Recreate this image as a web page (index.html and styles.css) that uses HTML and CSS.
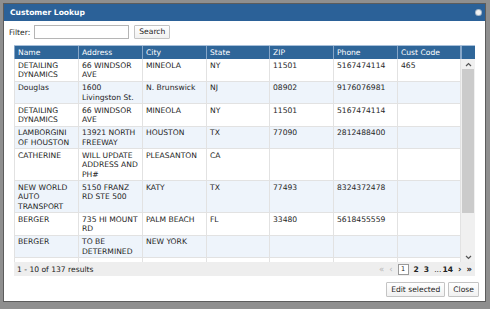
FILE: index.html
```html
<!DOCTYPE html>
<html>
<head>
<meta charset="utf-8">
<link rel="stylesheet" href="styles.css">
</head>
<body>
<div class="dialog">
  <div class="titlebar">
    <span class="title">Customer Lookup</span>
    <span class="close-icon"></span>
  </div>
  <div class="content">
    <div class="filter">
      <label class="filter-label">Filter:</label>
      <input class="filter-input" type="text">
      <button class="btn search-btn">Search</button>
    </div>
    <div class="grid">
      <div class="grid-head">
        <table class="tbl head-tbl">
          <colgroup><col class="c1"><col class="c2"><col class="c3"><col class="c4"><col class="c5"><col class="c6"><col class="c7"></colgroup>
          <tr><th>Name</th><th>Address</th><th>City</th><th>State</th><th>ZIP</th><th>Phone</th><th>Cust Code</th></tr>
        </table>
        <div class="head-spacer"></div>
      </div>
      <div class="grid-body">
        <div class="rows">
          <table class="tbl body-tbl">
            <colgroup><col class="c1"><col class="c2"><col class="c3"><col class="c4"><col class="c5"><col class="c6"><col class="c7"></colgroup>
            <tr><td>DETAILING DYNAMICS</td><td>66 WINDSOR AVE</td><td>MINEOLA</td><td>NY</td><td>11501</td><td>5167474114</td><td>465</td></tr>
            <tr class="alt"><td>Douglas</td><td>1600 Livingston St.</td><td>N. Brunswick</td><td>NJ</td><td>08902</td><td>9176076981</td><td></td></tr>
            <tr><td>DETAILING DYNAMICS</td><td>66 WINDSOR AVE</td><td>MINEOLA</td><td>NY</td><td>11501</td><td>5167474114</td><td></td></tr>
            <tr class="alt"><td>LAMBORGINI OF HOUSTON</td><td>13921 NORTH FREEWAY</td><td>HOUSTON</td><td>TX</td><td>77090</td><td>2812488400</td><td></td></tr>
            <tr><td>CATHERINE</td><td>WILL UPDATE ADDRESS AND PH#</td><td>PLEASANTON</td><td>CA</td><td></td><td></td><td></td></tr>
            <tr class="alt"><td>NEW WORLD AUTO TRANSPORT</td><td>5150 FRANZ RD STE 500</td><td>KATY</td><td>TX</td><td>77493</td><td>8324372478</td><td></td></tr>
            <tr><td>BERGER</td><td>735 HI MOUNT RD</td><td>PALM BEACH</td><td>FL</td><td>33480</td><td>5618455559</td><td></td></tr>
            <tr class="alt"><td>BERGER</td><td>TO BE DETERMINED</td><td>NEW YORK</td><td></td><td></td><td></td><td></td></tr>
            <tr><td>&nbsp;<br>&nbsp;</td><td></td><td></td><td></td><td></td><td></td><td></td></tr>
          </table>
        </div>
        <div class="scrollbar">
          <div class="sb-arrow sb-up">
            <svg width="7" height="5" viewBox="0 0 7 5"><path d="M1 4 L3.5 1.5 L6 4" fill="none" stroke="#555" stroke-width="1.2"/></svg>
          </div>
          <div class="sb-track"><div class="sb-thumb"></div></div>
          <div class="sb-arrow sb-down">
            <svg width="7" height="5" viewBox="0 0 7 5"><path d="M1 1 L3.5 3.5 L6 1" fill="none" stroke="#555" stroke-width="1.2"/></svg>
          </div>
        </div>
      </div>
      <div class="grid-foot">
        <span class="results">1 - 10 of 137 results</span>
        <div class="pager">
          <span class="pg-arrow disabled">&laquo;</span>
          <span class="pg-arrow disabled">&lsaquo;</span>
          <span class="pg-current">1</span>
          <span class="pg-num">2</span>
          <span class="pg-num">3</span>
          <span class="pg-dots">...</span>
          <span class="pg-num pg-last">14</span>
          <span class="pg-arrow">&rsaquo;</span>
          <span class="pg-arrow">&raquo;</span>
        </div>
      </div>
    </div>
    <div class="actions">
      <button class="btn">Edit selected</button>
      <button class="btn">Close</button>
    </div>
  </div>
</div>
</body>
</html>
```
FILE: styles.css
```css
html, body {
  margin: 0;
  padding: 0;
}
body {
  background: #8f8f8f;
  width: 490px;
  height: 309px;
  overflow: hidden;
  font-family: "DejaVu Sans", Verdana, sans-serif;
  font-size: 7.6px;
  color: #222;
}
.dialog {
  margin: 3px 0 0 3px;
  width: 481px;
  height: 297px;
  background: #fff;
  border: 1px solid #5c5c5c;
  display: flex;
  flex-direction: column;
}
.titlebar {
  height: 17px;
  background: #2b6198;
  display: flex;
  align-items: center;
  justify-content: space-between;
  padding: 0 4px 0 6px;
}
.title {
  color: #fff;
  font-weight: bold;
  font-size: 7.6px;
}
.close-icon {
  width: 5px;
  height: 5px;
  border-radius: 50%;
  background: #f2f2f2;
  box-shadow: 0 0 0 1px #a8b8c8;
  margin-top: -1px;
}
.content {
  padding: 4px 7px 0 10px;
  display: flex;
  flex-direction: column;
}
.filter {
  display: flex;
  align-items: center;
  height: 14px;
  margin-left: -5px;
}
.filter-label {
  margin-right: 4px;
}
.filter-input {
  width: 95px;
  height: 14px;
  box-sizing: border-box;
  border: 1px solid #b5b5b5;
  padding: 0;
  margin: 0 5px 0 0;
  background: #fff;
}
.btn {
  font-family: "DejaVu Sans", Verdana, sans-serif;
  font-size: 7.6px;
  color: #222;
  height: 15px;
  box-sizing: border-box;
  padding: 0 4px;
  margin: 0;
  border: 1px solid #c4c4c4;
  background: linear-gradient(#ffffff, #f1f1f1);
  border-radius: 1px;
  line-height: 13px;
}
.search-btn {
  width: 36px;
  height: 14px;
  line-height: 12px;
}
.grid {
  margin-top: 6px;
  width: 461px;
}
.grid-head {
  display: flex;
  height: 13px;
  background: #2f6699;
  border-top: 1px solid #a8c0da;
}
.tbl {
  border-collapse: collapse;
  table-layout: fixed;
  width: 446px;
}
.c1 { width: 64px; }
.c2 { width: 64px; }
.c3 { width: 64px; }
.c4 { width: 63px; }
.c5 { width: 64px; }
.c6 { width: 64px; }
.c7 { width: 63px; }
.head-tbl th {
  color: #fff;
  font-weight: normal;
  text-align: left;
  padding: 0 3px;
  height: 12px;
  line-height: 12px;
  border-right: 1px solid #86a6c8;
  border-left: 1px solid #86a6c8;
  white-space: nowrap;
  overflow: hidden;
}
.head-spacer {
  width: 15px;
  border-left: 1px solid #86a6c8;
  box-sizing: border-box;
}
.grid-body {
  display: flex;
  height: 203px;
  overflow: hidden;
}
.rows {
  width: 446px;
  height: 203px;
  overflow: hidden;
}
.body-tbl td {
  vertical-align: top;
  padding: 1.5px 2px 1px 3px;
  line-height: 9.5px;
  border-right: 1px solid #e2e2e2;
  border-left: 1px solid #e2e2e2;
  border-bottom: 1px solid #e2e2e2;
  overflow: hidden;
  color: #1e1e1e;
}
.body-tbl tr.alt td {
  background: #eef4fb;
}
.scrollbar {
  width: 15px;
  background: #f0f0f0;
  display: flex;
  flex-direction: column;
  border-left: 1px solid #e2e2e2;
  box-sizing: border-box;
}
.sb-arrow {
  height: 10px;
  display: flex;
  align-items: center;
  justify-content: center;
}
.sb-track {
  flex: 1;
  display: flex;
  flex-direction: column;
}
.sb-thumb {
  height: 144px;
  background: #cbcbcb;
  margin: 0 1px;
}
.grid-foot {
  height: 14px;
  background: #eeeeee;
  display: flex;
  align-items: center;
  justify-content: space-between;
  padding: 0 3px 0 3px;
}
.pager {
  display: flex;
  align-items: center;
  gap: 5px;
  font-weight: bold;
  color: #222;
}
.pg-arrow {
  font-size: 8.5px;
  color: #222;
}
.pg-arrow.disabled {
  color: #b5b5b5;
  font-weight: normal;
}
.pg-current {
  font-weight: normal;
  border: 1px solid #999;
  background: #fff;
  width: 9px;
  height: 9px;
  line-height: 9px;
  text-align: center;
  font-size: 6.5px;
}
.pg-dots {
  font-weight: normal;
  margin-right: -4px;
}
.actions {
  display: flex;
  justify-content: flex-end;
  gap: 3px;
  margin-top: 6px;
  margin-right: -1px;
}
```
